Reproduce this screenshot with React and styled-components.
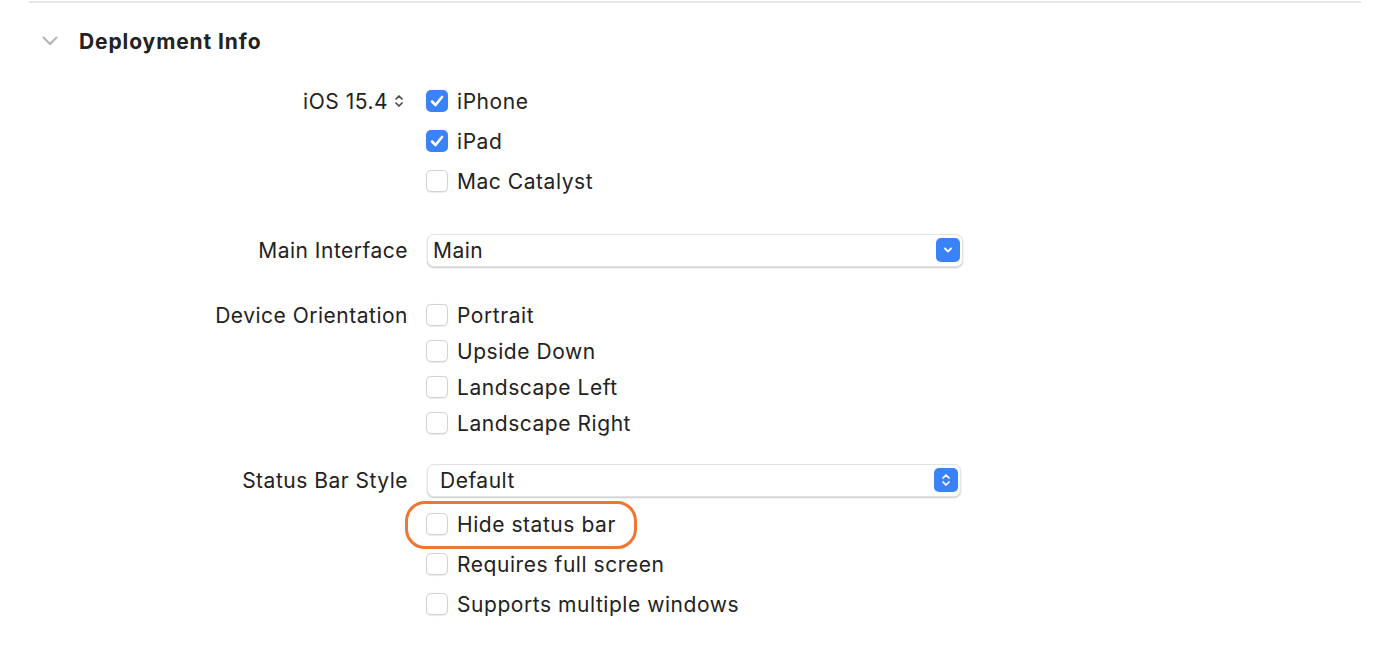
import styled, { createGlobalStyle } from "styled-components";

const Global = createGlobalStyle`
  html, body { margin: 0; padding: 0; background: #fff; }
  body { font-family: Inter, "Liberation Sans", sans-serif; color: #222; -webkit-font-smoothing: antialiased; }
`;

const Page = styled.div`
  width: 1391px; height: 657px; overflow: hidden; position: relative;
  padding: 0 30px 0 29px; box-sizing: border-box;
`;

const TopRule = styled.div`
  height: 2px; margin-top: 1px; background: #e6e6e6;
`;

const Header = styled.div`
  display: flex; align-items: center; height: 40px; margin-top: 18px;
  padding-left: 13px; gap: 21px;
`;

const Title = styled.div`
  font-size: 21px; font-weight: 700; letter-spacing: 0.9px;
`;

const Form = styled.div`
  display: grid; grid-template-columns: 379px 1fr; column-gap: 18px;
  margin-top: 20px;
`;

const Label = styled.div`
  height: ${(p) => p.h}px; display: flex; align-items: center; justify-content: flex-end;
  gap: 6px; font-size: 21px; letter-spacing: 0.5px; margin-top: ${(p) => p.mt || 0}px;
  padding-right: ${(p) => p.pr || 0}px;
`;

const Controls = styled.div`
  display: flex; flex-direction: column; margin-top: ${(p) => p.mt || 0}px;
`;

const Row = styled.div`
  height: ${(p) => p.h}px; display: flex; align-items: center; gap: 9px;
  font-size: 21px; letter-spacing: 0.55px; position: relative; margin-top: ${(p) => p.mt || 0}px;
`;

const Box = styled.span`
  width: 22px; height: 22px; box-sizing: border-box; border-radius: 5px; flex: none;
  display: flex; align-items: center; justify-content: center;
  background: ${(p) => (p.on ? "#3a82f7" : "#fff")};
  border: ${(p) => (p.on ? "none" : "1px solid #d2d2d2")};
  box-shadow: ${(p) => (p.on ? "none" : "0 0.5px 1px rgba(0,0,0,0.08)")};
`;

const Popup = styled.div`
  width: ${(p) => p.w}px; height: 33px; box-sizing: border-box; margin-left: 1px;
  border-radius: 7px; background: #fff; border: 1px solid #e3e3e3;
  box-shadow: 0 1px 1.5px rgba(0,0,0,0.22);
  display: flex; align-items: center; justify-content: space-between;
  padding: 0 2px 0 ${(p) => p.pl}px; font-size: 21px; letter-spacing: 0.5px;
`;

const Stepper = styled.span`
  width: 24px; height: 24px; border-radius: 5px; background: #3a82f7;
  display: flex; align-items: center; justify-content: center;
`;

const Highlight = styled.div`
  position: absolute; left: -21px; top: -3px; width: 232px; height: 48px;
  box-sizing: border-box; border: 3.5px solid #ee7630; border-radius: 20px;
  pointer-events: none;
`;

const Check = ({ on }) => (
  <Box on={on}>
    {on && (
      <svg width="14" height="12" viewBox="0 0 14 12">
        <path d="M2 6.5 L5.5 10 L12 2" fill="none" stroke="#fff" strokeWidth="2.6" strokeLinecap="round" strokeLinejoin="round" />
      </svg>
    )}
  </Box>
);

const Item = ({ on, h, mt, children }) => (
  <Row h={h} mt={mt}>
    <Check on={on} />
    <span>{children}</span>
  </Row>
);

const Chevron = () => (
  <svg width="16" height="10" viewBox="0 0 16 10">
    <path d="M1.5 1.5 L8 8 L14.5 1.5" fill="none" stroke="#b3b3b3" strokeWidth="2" strokeLinecap="round" strokeLinejoin="round" />
  </svg>
);

const UpDown = ({ color = "#4a4a4a", w = 10, h = 16 }) => (
  <svg width={w} height={h} viewBox="0 0 10 16">
    <path d="M2 6 L5 3 L8 6 M2 10 L5 13 L8 10" fill="none" stroke={color} strokeWidth="1.7" strokeLinecap="round" strokeLinejoin="round" />
  </svg>
);

const Down = () => (
  <svg width="10" height="8" viewBox="0 0 10 8">
    <path d="M2 2.5 L5 5.5 L8 2.5" fill="none" stroke="#fff" strokeWidth="1.8" strokeLinecap="round" strokeLinejoin="round" />
  </svg>
);

export default function App() {
  return (
    <>
      <Global />
      <Page>
        <TopRule />
        <Header>
          <Chevron />
          <Title>Deployment Info</Title>
        </Header>
        <Form>
          <Label h={40} pr={4}>
            iOS 15.4 <UpDown />
          </Label>
          <Controls>
            <Item on h={40}>iPhone</Item>
            <Item on h={40}>iPad</Item>
            <Item h={40}>Mac Catalyst</Item>
          </Controls>

          <Label h={40} mt={29}>Main Interface</Label>
          <Controls mt={29}>
            <Row h={40}>
              <Popup w={536} pl={5}>
                <span>Main</span>
                <Stepper><Down /></Stepper>
              </Popup>
            </Row>
          </Controls>

          <Label h={36} mt={27}>Device Orientation</Label>
          <Controls mt={27}>
            <Item h={36}>Portrait</Item>
            <Item h={36}>Upside Down</Item>
            <Item h={36}>Landscape Left</Item>
            <Item h={36}>Landscape Right</Item>
          </Controls>

          <Label h={40} mt={19}>Status Bar Style</Label>
          <Controls mt={19}>
            <Row h={40}>
              <Popup w={534} pl={12}>
                <span>Default</span>
                <Stepper><UpDown color="#fff" w={10} h={16} /></Stepper>
              </Popup>
            </Row>
            <Row h={40} mt={4}>
              <Check />
              <span>Hide status bar</span>
              <Highlight />
            </Row>
            <Item h={40}>Requires full screen</Item>
            <Item h={40}>Supports multiple windows</Item>
          </Controls>
        </Form>
      </Page>
    </>
  );
}
